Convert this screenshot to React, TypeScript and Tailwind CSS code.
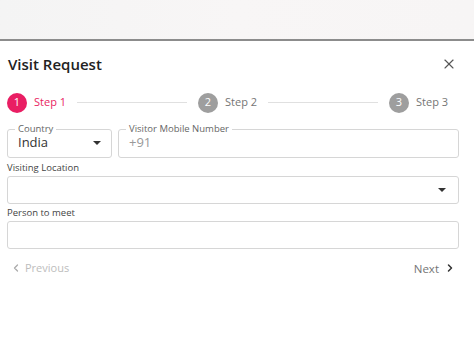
import { ChevronLeft, ChevronRight, X } from 'lucide-react';

const font = { fontFamily: '"Open Sans", "Noto Sans", sans-serif' };

function Step({ n, label, active }: { n: number; label: string; active?: boolean }) {
  return (
    <div className="flex items-center gap-[7px] shrink-0">
      <div
        className={`w-5 h-5 rounded-full flex items-center justify-center text-[11px] text-white ${
          active ? 'bg-[#e91e63]' : 'bg-[#9e9e9e]'
        }`}
      >
        {n}
      </div>
      <span className={`text-[11px] ${active ? 'text-[#e91e63]' : 'text-[#757575]'}`}>{label}</span>
    </div>
  );
}

function Caret() {
  return <div className="w-0 h-0 border-l-[4px] border-r-[4px] border-t-[4px] border-l-transparent border-r-transparent border-t-[#333]" />;
}

export default function App() {
  return (
    <div className="w-[474px] h-[355px] bg-white overflow-hidden" style={font}>
      <div className="h-[39px] bg-gradient-to-r from-[#f4f4f4] via-[#f8f6f6] to-[#f7f5f5]" />
      <div className="h-[2px] bg-[#8c8c8c]" />

      <div className="px-[7px]">
        <div className="flex items-center justify-between pt-[12px] pl-[1px] pr-[10px]">
          <h2 className="text-[15px] font-semibold text-[#222]">Visit Request</h2>
          <X size={16} strokeWidth={1.7} className="text-[#555]" />
        </div>

        <div className="flex items-center mt-[17px]">
          <Step n={1} label="Step 1" active />
          <div className="flex-1 h-px bg-[#e0e0e0] mx-[11px]" />
          <Step n={2} label="Step 2" />
          <div className="flex-1 h-px bg-[#e0e0e0] mx-[11px]" />
          <div className="mr-[19px]">
            <Step n={3} label="Step 3" />
          </div>
        </div>

        <div className="flex gap-[6px] mt-[16px] pr-[8px]">
          <div className="relative w-[105px] h-[29px] border border-[#d6d6d6] rounded-[3px] flex items-center justify-between pl-[10px] pr-[10px]">
            <span className="absolute -top-[7px] left-[7px] bg-white px-[3px] text-[9.5px] leading-[12px] text-[#666]">Country</span>
            <span className="text-[13px] text-[#333]">India</span>
            <Caret />
          </div>
          <div className="relative flex-1 h-[29px] border border-[#d6d6d6] rounded-[3px] flex items-center pl-[10px]">
            <span className="absolute -top-[7px] left-[7px] bg-white px-[3px] text-[9.5px] leading-[12px] text-[#666]">Visitor Mobile Number</span>
            <span className="text-[13px] text-[#999]">+91</span>
          </div>
        </div>

        <div className="pr-[8px]">
          <div className="text-[9.5px] text-[#444] mt-[3px] leading-[14px]">Visiting Location</div>
          <div className="h-[28px] border border-[#d6d6d6] rounded-[3px] mt-[1px] flex items-center justify-end pr-[12px]">
            <Caret />
          </div>
          <div className="text-[9.5px] text-[#444] mt-[2px] leading-[14px]">Person to meet</div>
          <div className="h-[28px] border border-[#d6d6d6] rounded-[3px] mt-[1px]" />
        </div>

        <div className="flex items-center justify-between mt-[11px] pl-[3px] pr-[11px]">
          <div className="flex items-center gap-[3px] text-[#bdbdbd] text-[11px]">
            <ChevronLeft size={12} strokeWidth={2.5} className="text-[#aaa]" />
            <span>Previous</span>
          </div>
          <div className="flex items-center gap-[5px] text-[#757575] text-[11.5px]">
            <span>Next</span>
            <ChevronRight size={12} strokeWidth={3} className="text-[#333]" />
          </div>
        </div>
      </div>
    </div>
  );
}
